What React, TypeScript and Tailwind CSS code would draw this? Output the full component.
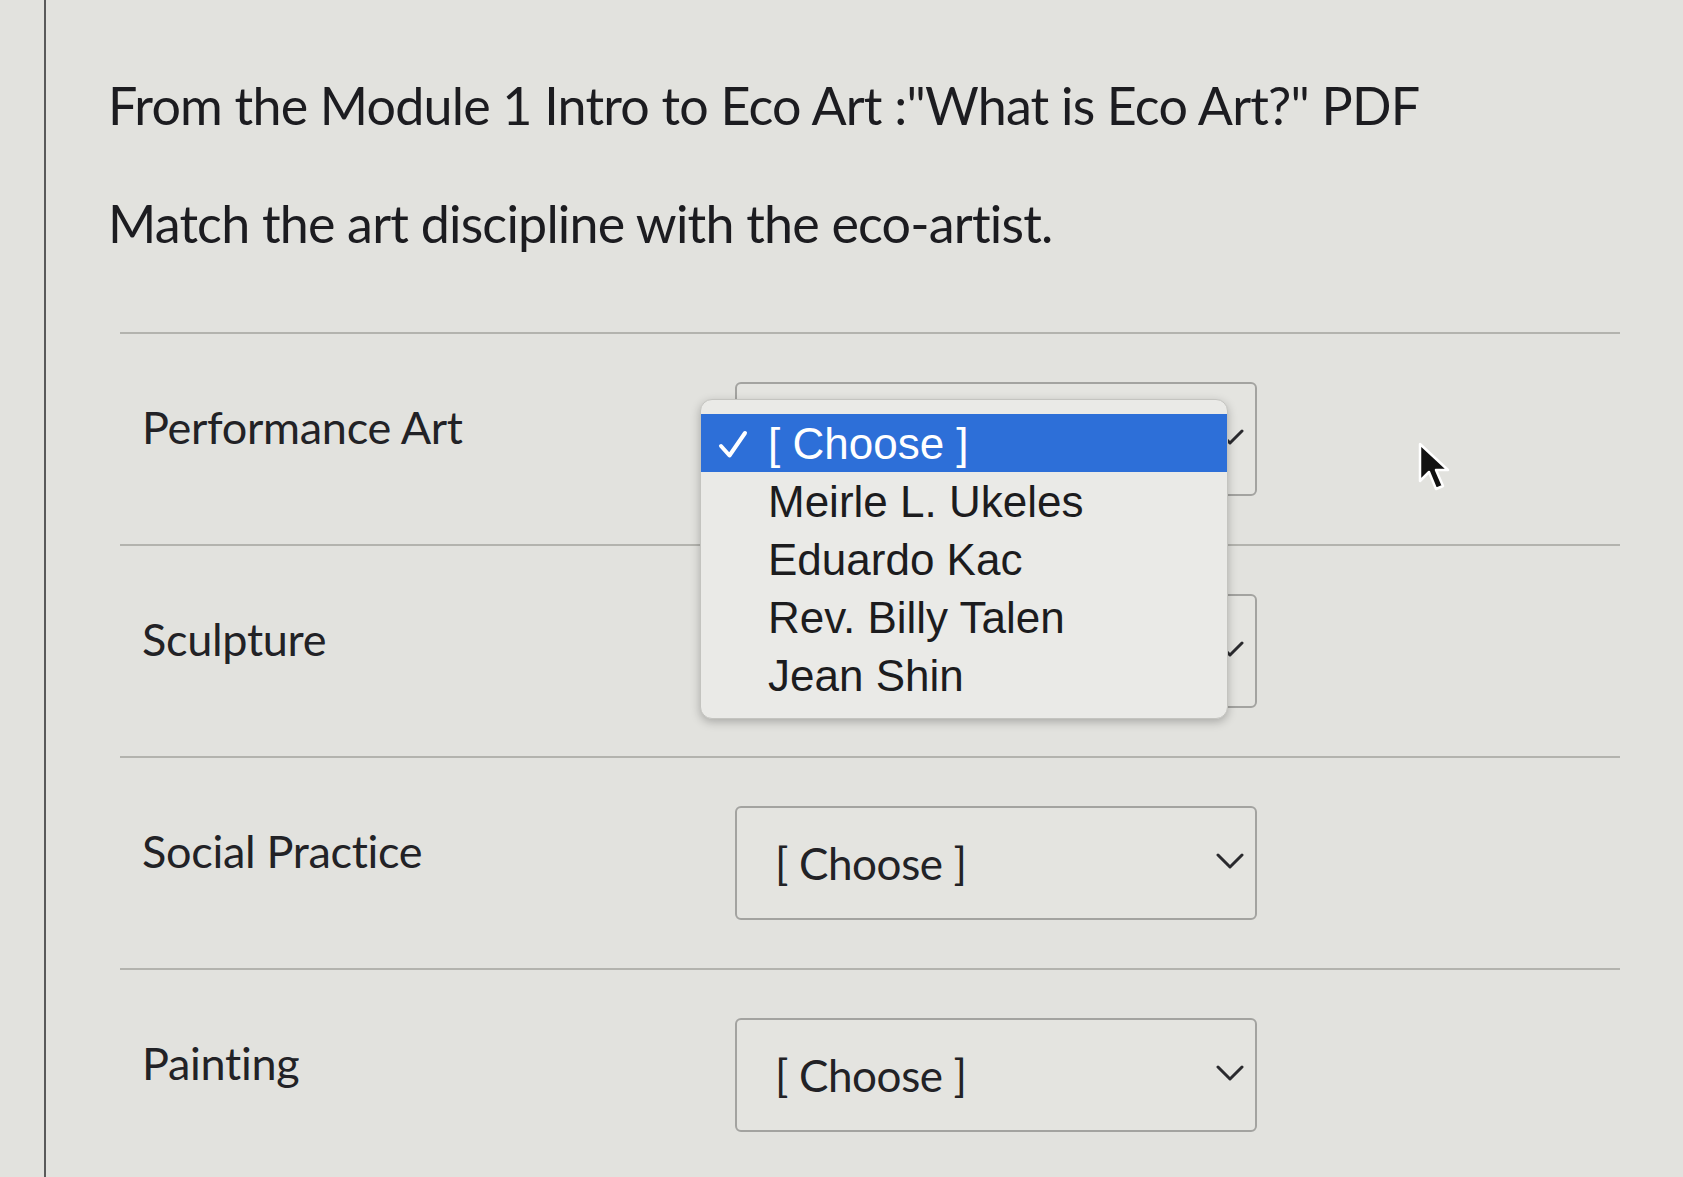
const rows = [
  { label: "Performance Art", open: true },
  { label: "Sculpture", open: false },
  { label: "Social Practice", open: false },
  { label: "Painting", open: false },
];

const options = ["[ Choose ]", "Meirle L. Ukeles", "Eduardo Kac", "Rev. Billy Talen", "Jean Shin"];

function SelectBox() {
  return (
    <div className="w-[522px] h-[114px] rounded-[6px] border-2 border-[#a3a3a0] bg-[#e4e4e0] flex items-center justify-between pl-[38px] pr-[11px]">
      <span className="text-[44px] tracking-[-0.4px] text-[#222226]" style={{ fontFamily: "Lato, sans-serif" }}>
        [ Choose ]
      </span>
      <svg width="28" height="18" viewBox="0 0 28 18" className="mb-[4px]">
        <path d="M2 3 L14 15 L26 3" fill="none" stroke="#2a2a2e" strokeWidth="3" strokeLinecap="round" strokeLinejoin="round" />
      </svg>
    </div>
  );
}

function OptionMenu() {
  return (
    <div
      className="absolute left-[-35px] top-[17px] z-10 w-[528px] rounded-[12px] border border-[#c4c4c0] bg-[#eaeae7] pt-[14px] pb-[14px] shadow-[0_3px_10px_rgba(0,0,0,0.25)]"
      style={{ fontFamily: "'Liberation Sans', Arial, sans-serif" }}
    >
      {options.map((o, i) => (
        <div
          key={o}
          className={
            i === 0
              ? "relative h-[58px] leading-[60px] pl-[67px] text-[44px] text-white bg-[#2d6fd8]"
              : "relative h-[58px] leading-[60px] pl-[67px] text-[44px] text-[#1c1c1e]"
          }
        >
          {i === 0 && (
            <svg className="absolute left-[17px] top-[16px]" width="30" height="30" viewBox="0 0 30 30">
              <path d="M3 16 L11.5 25.5 L27 3" fill="none" stroke="white" strokeWidth="4" strokeLinecap="round" strokeLinejoin="round" />
            </svg>
          )}
          {o}
        </div>
      ))}
    </div>
  );
}

export default function App() {
  return (
    <div className="relative min-h-[1177px] w-full overflow-hidden bg-[#e2e2de] flex" style={{ fontFamily: "Lato, sans-serif" }}>
      {/* left rail */}
      <div className="w-[46px] shrink-0 border-r-2 border-[#5a5a5a]" />

      <div className="flex-1">
        <div className="pl-[62px] pt-[74px] text-[52px] tracking-[-0.8px] text-[#1c1c20] leading-[1.2]">
          <p>From the Module 1 Intro to Eco Art :"What is Eco Art?" PDF</p>
          <p className="mt-[56px]">Match the art discipline with the eco-artist.</p>
        </div>

        <div className="ml-[74px] w-[1500px] mt-[77px]">
          {rows.map((r) => (
            <div key={r.label} className="h-[212px] border-t-2 border-[#b3b3ae] flex items-start pt-[48px]">
              <div className="w-[615px] pl-[22px] pt-[18px] text-[45px] tracking-[-0.3px] leading-[1.2] text-[#222226]">{r.label}</div>
              <div className="relative">
                <SelectBox />
                {r.open && <OptionMenu />}
              </div>
            </div>
          ))}
        </div>
      </div>

      {/* mouse pointer */}
      <svg className="absolute left-[1416px] top-[441px]" width="36" height="54" viewBox="0 0 36 54">
        <path
          d="M4 3 L4 40 L13 31 L20 48 L27 45 L20 29 L32 29 Z"
          fill="#111"
          stroke="white"
          strokeWidth="2.5"
          strokeLinejoin="round"
        />
      </svg>
    </div>
  );
}
